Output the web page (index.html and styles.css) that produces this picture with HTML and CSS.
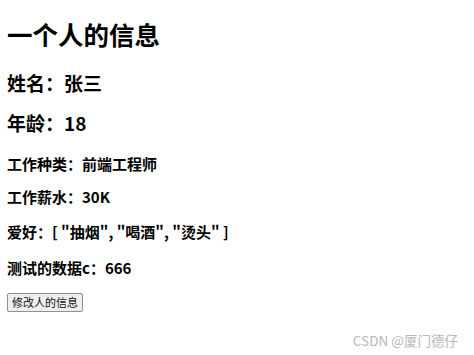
FILE: index.html
```html
<!DOCTYPE html>
<html lang="zh">
<head>
<meta charset="utf-8">
<link rel="stylesheet" href="styles.css">
</head>
<body>
<div class="app">
  <h2 class="title">一个人的信息</h2>
  <h3 class="big">姓名：张三</h3>
  <h3 class="big">年龄：18</h3>
  <h4 class="item first">工作种类：前端工程师</h4>
  <h4 class="item salary">工作薪水：30K</h4>
  <h4 class="item hobby">爱好：[ "抽烟", "喝酒", "烫头" ]</h4>
  <h4 class="item last">测试的数据c：666</h4>
  <button class="btn">修改人的信息</button>
</div>
<div class="watermark">CSDN @厦门德仔</div>
</body>
</html>
```

FILE: styles.css
```css
html, body {
  margin: 0;
  padding: 0;
  background: #ffffff;
}
body {
  font-family: "Noto Sans CJK SC", "Noto Sans", sans-serif;
  color: #000000;
  width: 474px;
  height: 355px;
  position: relative;
  overflow: hidden;
}
.app {
  padding: 19px 7px 0 7px;
}
.title {
  margin: 0;
  font-size: 25.5px;
  line-height: 30px;
  font-weight: 700;
}
.big {
  margin: 0;
  font-size: 19px;
  line-height: 40px;
  font-weight: 700;
}
.title + .big {
  margin-top: 14px;
}
.item {
  margin: 0;
  font-size: 15px;
  line-height: 34px;
  font-weight: 700;
}
.item.first {
  margin-top: 4px;
}
.item.salary {
  margin-top: -1px;
}
.item.hobby {
  margin-top: 1px;
}
.item.last {
  margin-top: 2px;
}
.btn {
  display: block;
  margin-top: 8px;
  font-family: "Noto Sans CJK SC", sans-serif;
  font-size: 11px;
  line-height: 15px;
  height: 19px;
  width: 76px;
  padding: 0 4px;
  color: #111111;
  background: #efefef;
  border: 1px solid #8f8f8f;
  border-radius: 2px;
}
.watermark {
  position: absolute;
  right: 16px;
  bottom: 7px;
  font-family: "Noto Sans CJK SC", "Liberation Sans", sans-serif;
  font-size: 13.5px;
  line-height: 16px;
  color: #b8b8b8;
}
```
